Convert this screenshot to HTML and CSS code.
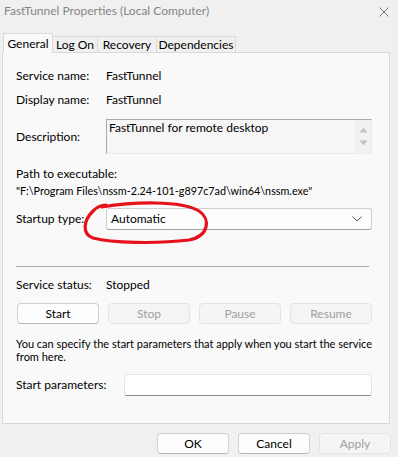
FILE: index.html
```html
<!DOCTYPE html>
<html>
<head>
<meta charset="utf-8">
<link rel="stylesheet" href="styles.css">
</head>
<body>
<div class="window">
  <div class="titlebar">
    <span class="title">FastTunnel Properties (Local Computer)</span>
    <svg class="close" width="10" height="10" viewBox="0 0 10 10"><path d="M0.5 0.5 L9.5 9.5 M9.5 0.5 L0.5 9.5" stroke="#7a7a7a" stroke-width="1" fill="none"/></svg>
  </div>
  <div class="tabs">
    <div class="tab active t-general">General</div>
    <div class="tab t-logon">Log On</div>
    <div class="tab t-recovery">Recovery</div>
    <div class="tab t-deps">Dependencies</div>
  </div>
  <div class="panel">
    <div class="row r-service"><span class="label">Service name:</span><span>FastTunnel</span></div>
    <div class="row r-display"><span class="label">Display name:</span><span>FastTunnel</span></div>
    <div class="row r-desc">
      <span class="label">Description:</span>
      <div class="textbox">
        <div class="textbox-text">FastTunnel for remote desktop</div>
        <div class="scroll">
          <svg width="9" height="6" viewBox="0 0 9 6"><path d="M0.5 5.5 L4.5 0.5 L8.5 5.5 Z" fill="#c4c4c4"/></svg>
          <svg width="9" height="6" viewBox="0 0 9 6"><path d="M0.5 0.5 L4.5 5.5 L8.5 0.5 Z" fill="#c4c4c4"/></svg>
        </div>
      </div>
    </div>
    <div class="path-label">Path to executable:</div>
    <div class="path">"F:\Program Files\nssm-2.24-101-g897c7ad\win64\nssm.exe"</div>
    <div class="row r-startup">
      <span class="label">Startup type:</span>
      <div class="combo">
        <span>Automatic</span>
        <svg width="10" height="6" viewBox="0 0 10 6"><path d="M0.5 0.5 L5 5 L9.5 0.5" stroke="#555" stroke-width="1" fill="none"/></svg>
      </div>
    </div>
    <div class="separator"></div>
    <div class="row r-status"><span class="label">Service status:</span><span>Stopped</span></div>
    <div class="svc-buttons">
      <button class="btn">Start</button>
      <button class="btn disabled">Stop</button>
      <button class="btn disabled">Pause</button>
      <button class="btn disabled">Resume</button>
    </div>
    <p class="hint">You can specify the start parameters that apply when you start the service from here.</p>
    <div class="row r-params">
      <span class="label wide">Start parameters:</span>
      <div class="input"></div>
    </div>
  </div>
  <div class="footer">
    <button class="btn fbtn">OK</button>
    <button class="btn fbtn">Cancel</button>
    <button class="btn fbtn disabled">Apply</button>
  </div>
  <svg class="scribble" width="398" height="457" viewBox="0 0 398 457">
    <path d="M102 207 C 132 202, 181 200, 199 211 C 211 219, 209 236, 189 240 C 156 244, 112 243, 93 238 C 82 234, 83 221, 93 211 C 97 207, 101 205, 106 205" stroke="#e5121c" stroke-width="3.2" fill="none" stroke-linecap="round"/>
  </svg>
</div>
</body>
</html>
```
FILE: styles.css
```css
* { box-sizing: border-box; }
html, body { margin: 0; padding: 0; }
body {
  background: #f0f0f0;
  font-family: "Lato", "Liberation Sans", sans-serif;
  font-size: 12px;
  color: #000;
}
.window {
  position: relative;
  width: 398px;
  height: 457px;
  overflow: hidden;
}
.titlebar {
  height: 33px;
  display: flex;
  justify-content: space-between;
  align-items: flex-start;
  padding: 3px 9px 0 4px;
}
.title {
  line-height: 16px;
  color: #858585;
  font-size: 12px;
}
.close { margin-top: 4px; }
.tabs {
  display: flex;
  align-items: flex-end;
  height: 19px;
  padding-left: 3px;
  position: relative;
  z-index: 1;
}
.tab {
  height: 16px;
  border: 1px solid #d9d9d9;
  border-bottom: none;
  border-left: none;
  background: #f0f0f0;
  line-height: 15px;
  text-align: center;
}
.tab.active {
  height: 20px;
  margin-bottom: -1px;
  background: #f9f9f9;
  border-left: 1px solid #d9d9d9;
  line-height: 19px;
  padding-bottom: 2px;
}
.t-general { width: 50px; }
.t-logon { width: 45px; }
.t-recovery { width: 59px; }
.t-deps { width: 79px; }
.panel {
  margin: 0 8px 0 2px;
  height: 372px;
  background: #f9f9f9;
  border: 1px solid #d9d9d9;
  padding: 15px 17px 0 13px;
}
.row {
  display: flex;
  align-items: center;
  line-height: 16px;
}
.label { width: 90px; flex: none; }
.label.wide { width: 108px; }
.r-display { margin-top: 8px; }
.r-desc { margin-top: 11px; }
.textbox {
  flex: 1;
  height: 35px;
  display: flex;
  background: #f6f6f6;
  border: 1px solid #a8a8a8;
  border-right-color: #ececec;
  border-bottom-color: #ececec;
}
.textbox-text { flex: 1; padding: 0 2px; line-height: 15px; }
.scroll {
  width: 16px;
  background: #f1f1f1;
  display: flex;
  flex-direction: column;
  align-items: center;
  justify-content: space-around;
  padding: 3px 0;
}
.path-label { margin-top: 12px; line-height: 16px; }
.path { margin-top: 1px; line-height: 16px; font-size: 10.8px; }
.r-startup { margin-top: 9px; }
.combo {
  flex: 1;
  height: 22px;
  border: 1px solid #d0d0d0;
  border-bottom-color: #a0a0a0;
  border-radius: 3px;
  background: #fdfdfd;
  display: flex;
  align-items: center;
  justify-content: space-between;
  padding: 0 9px 0 4px;
}
.separator {
  margin-top: 36px;
  height: 1px;
  width: 353px;
  background: #a9a9a9;
}
.r-status { margin-top: 10px; }
.svc-buttons {
  margin-top: 10px;
  display: flex;
  gap: 9px;
  padding-left: 1px;
}
.btn {
  font: inherit;
  color: #000;
  height: 21px;
  width: 82px;
  padding: 0;
  background: #fdfdfd;
  border: 1px solid #d0d0d0;
  border-bottom-color: #b5b5b5;
  border-radius: 4px;
}
.btn.disabled {
  background: #f5f5f5;
  border-color: #e3e3e3;
  color: #a0a0a0;
}
.hint {
  margin: 13px 0 0;
  line-height: 13px;
  width: 364px;
  font-size: 11px;
}
.r-params { margin-top: 11px; }
.input {
  flex: 1;
  height: 22px;
  background: #fff;
  border: 1px solid #e5e5e5;
  border-bottom-color: #8a8a8a;
  border-radius: 3px;
}
.footer {
  display: flex;
  justify-content: flex-end;
  gap: 9px;
  padding: 9px 7px 0 0;
}
.fbtn { width: 72px; }
.scribble {
  position: absolute;
  left: 0;
  top: 0;
  pointer-events: none;
}
```
